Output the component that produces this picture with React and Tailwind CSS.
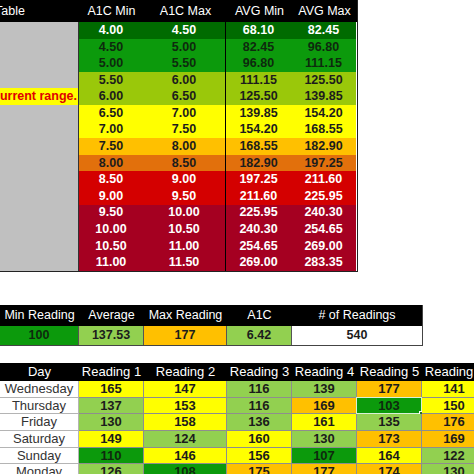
import React from "react";

const DK = "text-[#1c1c1c]";
const WH = "text-white";

const topRows = [
  ["4.00", "4.50", "68.10", "82.45", "bg-[#006b00]", WH],
  ["4.50", "5.00", "82.45", "96.80", "bg-[#0c9a0c]", "text-[#0e2a0e]"],
  ["5.00", "5.50", "96.80", "111.15", "bg-[#0c9a0c]", "text-[#0e2a0e]"],
  ["5.50", "6.00", "111.15", "125.50", "bg-[#9ac80a]", DK],
  ["6.00", "6.50", "125.50", "139.85", "bg-[#9ac80a]", DK],
  ["6.50", "7.00", "139.85", "154.20", "bg-[#ffff00]", DK],
  ["7.00", "7.50", "154.20", "168.55", "bg-[#ffff00]", DK],
  ["7.50", "8.00", "168.55", "182.90", "bg-[#ffc000]", DK],
  ["8.00", "8.50", "182.90", "197.25", "bg-[#e2700c]", DK],
  ["8.50", "9.00", "197.25", "211.60", "bg-[#d40000]", WH],
  ["9.00", "9.50", "211.60", "225.95", "bg-[#d40000]", WH],
  ["9.50", "10.00", "225.95", "240.30", "bg-[#a50021]", WH],
  ["10.00", "10.50", "240.30", "254.65", "bg-[#a50021]", WH],
  ["10.50", "11.00", "254.65", "269.00", "bg-[#a50021]", WH],
  ["11.00", "11.50", "269.00", "283.35", "bg-[#a50021]", WH],
];

const days = [
  ["Wednesday", [165, 147, 116, 139, 177, 141]],
  ["Thursday", [137, 153, 116, 169, 103, 150]],
  ["Friday", [130, 158, 136, 161, 135, 176]],
  ["Saturday", [149, 124, 160, 130, 173, 169]],
  ["Sunday", [110, 146, 156, 107, 164, 122]],
  ["Monday", [126, 108, 175, 177, 174, 130]],
];

const readingColor = (v) => {
  if (v < 111.15) return "bg-[#0c9a0c] text-[#0e2a0e]";
  if (v < 139.85) return "bg-[#92d050] text-[#1c1c1c]";
  if (v < 168.55) return "bg-[#ffff00] text-[#1c1c1c]";
  return "bg-[#ffc000] text-[#1c1c1c]";
};

const widths = ["w-[79px]", "w-[65px]", "w-[83px]", "w-[65px]", "w-[65px]", "w-[65px]", "w-[65px]"];

export default function App() {
  return (
    <div className="w-[474px] h-[474px] overflow-hidden bg-white font-['Liberation_Sans',Arial,sans-serif] flex flex-col">
      {/* Range table */}
      <div className="w-[358px] border-r border-b border-[#222] flex flex-col shrink-0">
        <div className="h-[22px] bg-black text-white text-[12.5px] flex items-center">
          <div className="w-[79px] overflow-hidden whitespace-nowrap">
            <span className="ml-[-5px]">Table</span>
          </div>
          <div className="w-[65px] text-center">A1C Min</div>
          <div className="w-[83px] text-center">A1C Max</div>
          <div className="w-[65px] text-center">AVG Min</div>
          <div className="w-[65px] text-center">AVG Max</div>
        </div>
        {topRows.map((r, i) => (
          <div key={i} className="h-[16.6px] flex text-[12.5px] font-bold">
            {i === 4 ? (
              <div className="w-[79px] bg-[#ffff00] border-r border-[#333] overflow-hidden whitespace-nowrap flex justify-end items-center text-[#e00000] pr-[1px]">
                Current range.
              </div>
            ) : (
              <div className="w-[79px] bg-[#c0c0c0] border-r border-[#333]" />
            )}
            <div className={`w-[64px] ${r[4]} ${r[5]} flex items-center justify-center`}>{r[0]}</div>
            <div className={`w-[83px] ${r[4]} ${r[5]} border-r border-black flex items-center justify-center`}>{r[1]}</div>
            <div className={`w-[65px] ${r[4]} ${r[5]} flex items-center justify-center`}>{r[2]}</div>
            <div className={`w-[65px] ${r[4]} ${r[5]} flex items-center justify-center`}>{r[3]}</div>
          </div>
        ))}
      </div>

      {/* Summary */}
      <div className="mt-[33px] w-[423px] border-r border-b border-[#444] shrink-0">
        <div className="h-[21px] bg-black text-white text-[12.5px] flex items-center">
          <div className="w-[79px] text-center">Min Reading</div>
          <div className="w-[65px] text-center">Average</div>
          <div className="w-[83px] text-center">Max Reading</div>
          <div className="w-[65px] text-center">A1C</div>
          <div className="flex-1 text-center"># of Readings</div>
        </div>
        <div className="h-[19px] flex text-[12.5px] font-bold">
          <div className="w-[79px] bg-[#0c9a0c] text-[#0e2a0e] border-r border-[#555] flex items-center justify-center">100</div>
          <div className="w-[65px] bg-[#92d050] text-[#1c1c1c] border-r border-[#555] flex items-center justify-center">137.53</div>
          <div className="w-[83px] bg-[#ffc000] text-[#1c1c1c] border-r border-[#555] flex items-center justify-center">177</div>
          <div className="w-[65px] bg-[#92d050] text-[#1c1c1c] border-r border-[#555] flex items-center justify-center">6.42</div>
          <div className="flex-1 bg-white text-[#1c1c1c] flex items-center justify-center">540</div>
        </div>
      </div>

      {/* Daily readings */}
      <div className="mt-[17px] w-[520px] shrink-0">
        <div className="h-[18px] bg-black text-white text-[13px] flex items-center">
          <div className="w-[79px] text-center">Day</div>
          {[1, 2, 3, 4, 5, 6].map((n) => (
            <div key={n} className={`${widths[n]} text-center whitespace-nowrap`}>Reading {n}</div>
          ))}
        </div>
        {days.map(([day, vals], i) => (
          <div key={day} className="h-[16.67px] flex text-[13px]">
            <div className="w-[79px] bg-white text-[#333] border-r border-b border-[#b4b4b4] flex items-center justify-center">
              {day}
            </div>
            {vals.map((v, j) => (
              <div
                key={j}
                className={`${widths[j + 1]} ${readingColor(v)} relative font-bold border-r border-b border-[#8e8e8e] flex items-center justify-center`}
              >
                {v}
                {i === 1 && j === 4 && (
                  <>
                    <div className="absolute inset-[-1px] border border-[#d8f0d8]" />
                    <div className="absolute right-[-3px] bottom-[-3px] w-[5px] h-[5px] bg-[#2f6a2f] border border-white" />
                  </>
                )}
              </div>
            ))}
          </div>
        ))}
      </div>
    </div>
  );
}
